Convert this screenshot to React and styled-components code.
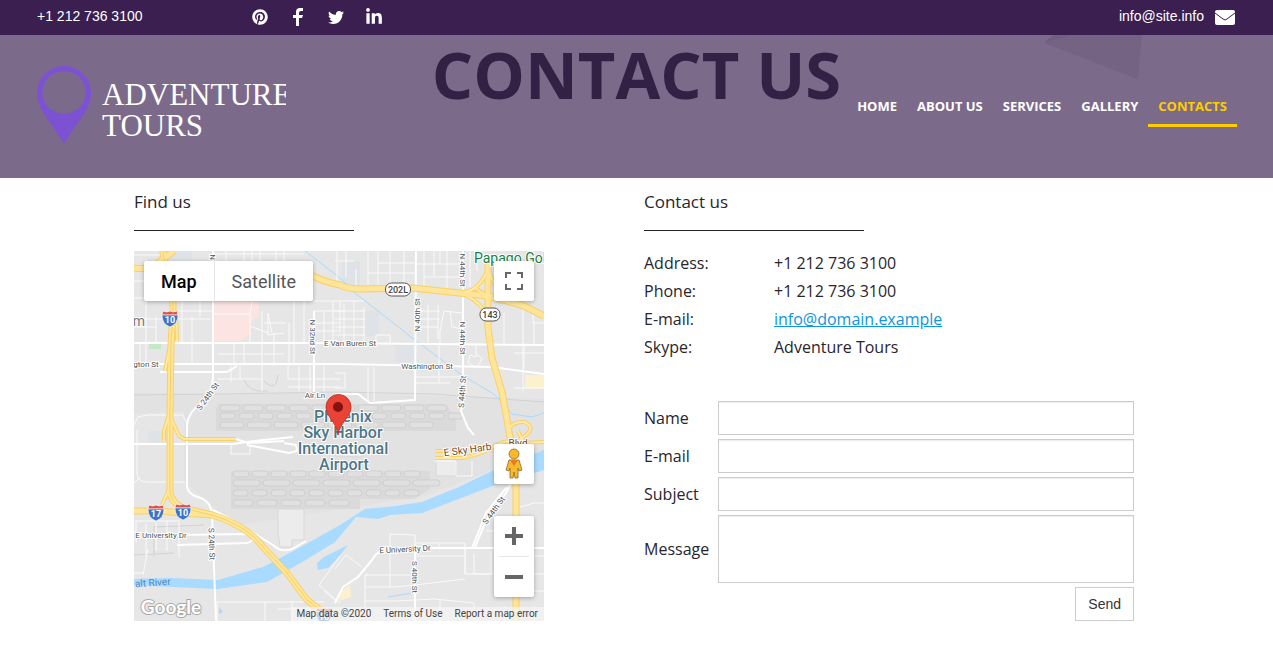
import React from "react";
import styled, { createGlobalStyle } from "styled-components";
import { FaPinterest, FaFacebookF, FaTwitter, FaLinkedinIn } from "react-icons/fa";

// --- STYLES ---
const GlobalStyle = createGlobalStyle`
  *, *::before, *::after { box-sizing: border-box; }
  body {
    margin: 0;
    background: #fff;
    color: #29252c;
    font-family: "Open Sans", sans-serif;
    font-size: 16px;
    line-height: 28px;
  }
`;

const TopBar = styled.div`
  display: flex;
  align-items: center;
  height: 35px;
  padding: 0 38px 1px 37px;
  background: #3b1f51;
  color: #fff;
  font-family: "Liberation Sans", Arial, sans-serif;
  font-size: 14px;
`;

const TopLink = styled.a`
  display: flex;
  align-items: center;
  gap: 11px;
  color: inherit;
  text-decoration: none;
`;

const TopText = styled.span`
  padding-bottom: 3px;
`;

const Phone = styled(TopLink)`
  width: 215px;
`;

const Socials = styled.div`
  display: flex;
  flex: 1;
  gap: 22px;
`;

const SocialLink = styled.a`
  display: flex;
  align-items: center;
  justify-content: center;
  width: 16px;
  color: #fff;
`;

const Header = styled.header`
  position: relative;
  display: grid;
  grid-template-columns: 1fr auto 1fr;
  align-items: start;
  min-height: 143px;
  padding: 3px 36px 0;
  background: #7c6a8b;
`;

const Shard = styled.svg`
  position: absolute;
  top: 0;
  right: 131px;
`;

const Logo = styled.a`
  display: flex;
  gap: 10px;
  width: 250px;
  margin-top: 27px;
  overflow: hidden;
  color: #fff;
  text-decoration: none;
  font-family: "Liberation Serif", "Times New Roman", serif;
  font-size: 31px;
  line-height: 31px;
`;

const LogoPin = styled.svg`
  flex: none;
`;

const LogoText = styled.span`
  padding-top: 14px;
`;

const Title = styled.h1`
  margin: 0;
  color: #332145;
  font-size: 65px;
  font-weight: 700;
  line-height: 72px;
`;

const Nav = styled.nav`
  display: flex;
  justify-content: flex-end;
  margin-top: 53px;
`;

const NavLink = styled.a`
  padding: 0 10px 3px;
  border-bottom: 3px solid ${(p) => (p.$active ? "#ffcc00" : "transparent")};
  color: ${(p) => (p.$active ? "#ffcc00" : "#fff")};
  font-size: 13px;
  font-weight: 700;
  line-height: 30px;
  text-decoration: none;
  white-space: nowrap;
`;

const Main = styled.main`
  display: grid;
  grid-template-columns: 1fr 1fr;
  gap: 15px;
  max-width: 1005px;
  margin: 0 auto;
  padding: 10px 0 24px;
`;

const Heading = styled.h2`
  position: relative;
  margin: 0 0 20px;
  padding-bottom: 15px;
  font-size: 17px;
  font-weight: 400;

  &::after {
    content: "";
    display: block;
    position: absolute;
    bottom: 0;
    width: 220px;
    border-bottom: 1px solid #262229;
  }
`;

const Details = styled.dl`
  display: grid;
  grid-template-columns: 130px 1fr;
  margin: -2px 0 40px;
`;

const Value = styled.dd`
  margin: 0;
`;

const MailLink = styled.a`
  color: #0d96e0;
`;

const Form = styled.form`
  display: grid;
  grid-template-columns: 74px 1fr;
  gap: 4px 0;
  align-items: center;
  max-width: 490px;
`;

const Field = styled.input`
  display: block;
  width: 100%;
  height: ${(p) => (p.$tall ? "68px" : "34px")};
  padding: 6px 12px;
  border: 1px solid #ccc;
  border-radius: 0;
  box-shadow: inset 0 1px 1px rgba(0, 0, 0, 0.075);
  font: inherit;
  resize: none;
`;

const Send = styled.button`
  grid-column: 2;
  justify-self: end;
  height: 34px;
  padding: 0 12px;
  border: 1px solid #ccc;
  background: #fff;
  color: #333;
  font-family: "Liberation Sans", Arial, sans-serif;
  font-size: 14px;
`;

const MapBox = styled.div`
  position: relative;
  max-width: 410px;
  height: 370px;
  overflow: hidden;
  background: #e7e7e7;
  font-family: Roboto, sans-serif;
`;

const MapSvg = styled.svg`
  display: block;
  font-family: Roboto, sans-serif;
`;

const MapTypes = styled.div`
  position: absolute;
  top: 10px;
  left: 10px;
  display: flex;
  border-radius: 2px;
  background: #fff;
  box-shadow: 0 1px 4px rgba(0, 0, 0, 0.3);
`;

const MapType = styled.button`
  height: 40px;
  padding: 0 17px;
  border: 0;
  border-left: ${(p) => (p.$active ? "0" : "1px solid #e6e6e6")};
  background: none;
  color: ${(p) => (p.$active ? "#000" : "#565656")};
  font-family: Roboto, sans-serif;
  font-size: 18px;
  font-weight: ${(p) => (p.$active ? 500 : 400)};
`;

const MapControls = styled.div`
  position: absolute;
  top: 10px;
  right: 10px;
  bottom: 24px;
  display: flex;
  flex-direction: column;
  gap: 32px;
`;

const ControlGroup = styled.div`
  display: flex;
  flex-direction: column;
  align-items: center;
  margin-top: ${(p) => (p.$push ? "auto" : "0")};
  border-radius: 2px;
  background: #fff;
  box-shadow: 0 1px 4px rgba(0, 0, 0, 0.3);
`;

const ControlButton = styled.button`
  display: flex;
  align-items: center;
  justify-content: center;
  width: 40px;
  height: 40px;
  padding: 0;
  border: 0;
  background: none;
`;

const Divider = styled.span`
  width: 30px;
  height: 1px;
  background: #e6e6e6;
`;

const Attribution = styled.div`
  position: absolute;
  right: 0;
  bottom: 0;
  display: flex;
  gap: 12px;
  padding: 0 6px 0 5px;
  background: rgba(245, 245, 245, 0.7);
  color: #444;
  font-size: 10px;
  line-height: 14px;
  white-space: nowrap;
`;

const AttributionLink = styled.a`
  color: inherit;
  text-decoration: none;
`;

// --- MAP DATA ---
const localRoads = [
  "M0 4H26M0 30H34M0 47H76M0 68H76M0 76H22M44 60H80M12 8V112M22 66V92M48 50V92M58 66V112M66 47V66M6 92V112",
  "M79 3H170M92 0V10M110 0V10M126 0V10M142 0V10M150 0V10M118 0V10",
  "M80 63H116L118 50M116 63V92M128 60V140M140 82V115M116 75L134 82M134 62L138 82M155 72V115",
  "M130 72H152M134 62V84L150 82M100 92V115M110 92V115M84 103H128M130 103H150M97 115V131M84 128H128M106 115V128",
  "M160 50V115M170 50V92M180 60H210M180 72H206M180 80H206M190 60V92M199 50V92M206 50V82M180 50H230M154 115V128H206M165 115V140M176 115V140M190 115V140M154 136H206",
  "M201 10H220M203 0V30M212 0V26M222 18V36M234 0V37M244 0V37M256 0V37M270 0V37M234 22H282M244 12H282",
  "M201 60H231M201 68H231M201 76H231M201 84H231M210 52V92M220 50V92M230 56V92M242 84V92M256 84V94M242 84H256",
  "M290 0V38M300 0V26M313 0V40M282 13H330M290 26H329M306 0V13M336 0V36M343 0V20M370 62V92M389 58V140M400 70V94",
  "M294 54V92M304 54V88M282 60H306M282 68H306M282 76H304M306 80L310 60L328 62M306 92V80M316 60L318 76L328 78",
  "M282 126H328M282 132H316M305 94V132M234 116V150M240 116V150M201 122H211V137H201M380 102H410M380 137H410M390 94V118M399 60V72H410",
  "M2 270H45M2 291V270M12 272V305M22 272V300M33 270V300M45 270V306M9 324L14 298M0 322H9",
  "M83 351H190M131 350V370M144 358H190M83 351V370M158 350V370M190 340L202 350",
  "M256 283V336M256 283L281 284V298M281 292H331V323H410M305 292V298M281 305H331M231 358V324H281M231 324L234 323M231 336H262L281 334L331 328",
  "M231 350H262L300 348L340 352V370M331 297V323M340 303V323H357V300M306 348V370M352 280H362V278M386 256L400 252H410M371 355V370M400 355V370M386 305H410M386 340H410",
  "M185 334L206 305M185 334L206 352M201 318L212 304L228 316M97 194V203H116V194M300 210H322V225H338V210",
  "M0 174L4 166L13 164H49L53 174M3 179V222Q3 231 14 231H51M0 232L6 226",
  "M342 92V106L336 104L334 112L343 116L348 108L342 102",
];

const mainRoads = [
  "M79 0V127Q78 144 66 153T53 174V236Q55 244 64 246Q76 249 78 262L82 370",
  "M0 113H206L358 116L410 123",
  "M26 121H93L103 115",
  "M0 92H189L410 94",
  "M180 60V141M282 0L281 149L236 152L224 143H201",
  "M329 0V150L327 160L334 177L340 184",
  "M0 193H99",
  "M43 284L113 283Q125 288 113 292L43 294",
  "M79 259L100 270L139 294Q147 302 158 298L172 290",
  "M201 352L209 336L224 326L238 309Q243 300 252 298L298 297H410",
  "M376 234L372 242L358 260L351 272L341 296M373 236L352 262L338 297",
  "M281 301V370M99 193L120 190L159 186M113 194L155 202L163 200L162 194L150 192M102 188L114 192L150 190",
];

const highways = [
  "M29 0Q30 14 36 22Q39 30 39 60L37 94L36 160L36 242Q38 252 49 257Q64 261 78 264Q92 268 106 276Q120 284 129 296L153 322L173 349L190 362",
  "M0 17Q16 20 29 8M29 8L40 0M0 260H23L78 264",
  "M170 20Q185 30 206 34Q213 38 226 38L278 37L354 45L388 54L410 65",
  "M354 12V77L358 107L368 141L374 174Q376 190 381 200L382 236V370",
];

const ramps = [
  "M43 90L42 60M31 120L37 90M36 160L30 180V190M36 165L45 185L50 188H102M36 236L28 254",
  "M330 41Q345 40 354 18M330 43Q348 52 354 66M378 50Q362 42 354 18M340 36L354 46L366 46",
  "M301 200H311M301 207H328Q345 204 358 197Q370 187 388 192L410 191",
  "M374 180Q378 170 390 171Q402 176 392 184L378 195M390 192L384 180",
];

const taxiRows = [
  { y: 157, from: 86, to: 302, step: 23, width: 20 },
  { y: 165, from: 86, to: 318, step: 19, width: 15 },
  { y: 174, from: 86, to: 302, step: 27, width: 24 },
  { y: 223, from: 99, to: 284, step: 19, width: 16 },
  { y: 232, from: 99, to: 280, step: 30, width: 27 },
  { y: 242, from: 99, to: 280, step: 19, width: 15 },
  { y: 252, from: 99, to: 210, step: 24, width: 20 },
];

const streetLabels = [
  { text: "E Van Buren St", x: 216, y: 95 },
  { text: "Washington St", x: 293, y: 118 },
  { text: "gton St", x: 12, y: 116 },
  { text: "Air Ln", x: 181, y: 147 },
  { text: "E University Dr", x: 27, y: 287 },
  { text: "E University Dr", x: 271, y: 301, r: -3 },
  { text: "N 32nd St", x: 176, y: 86, r: 90 },
  { text: "N 40th St", x: 286, y: 64, r: -90 },
  { text: "N 44th St", x: 326, y: 19, r: 90 },
  { text: "N 44th St", x: 326, y: 87, r: 90 },
  { text: "S 44th St", x: 331, y: 141, r: -86 },
  { text: "S 24th St", x: 76, y: 147, r: -54 },
  { text: "S 24th St", x: 75, y: 293, r: 88 },
  { text: "S 40th St", x: 278, y: 326, r: 90 },
  { text: "S 44th St", x: 362, y: 261, r: -54 },
];

const navItems = ["Home", "About us", "Services", "Gallery", "Contacts"];

const details = [
  ["Address:", "+1 212 736 3100"],
  ["Phone:", "+1 212 736 3100"],
  ["E-mail:", "info@domain.example"],
  ["Skype:", "Adventure Tours"],
];

const taxiPads = ({ y, from, to, step, width }) => {
  const pads = [];
  for (let x = from; x < to; x += step) {
    pads.push(<rect key={x} x={x} y={y - 3} width={width} height="6" rx="3" />);
  }
  return pads;
};

const Shield = ({ x, y, label }) => (
  <g transform={`translate(${x} ${y})`}>
    <path d="M-7-7Q-3-5 0-7Q3-5 7-7L8-3H-8Z" fill="#d9534f" stroke="#fff" strokeWidth="0.6" />
    <path d="M-8-3H8Q8 6 0 9Q-8 6-8-3Z" fill="#3b74c8" stroke="#fff" strokeWidth="0.6" />
    <text y="5" fill="#fff" fontSize="9" fontWeight="700" textAnchor="middle">{label}</text>
  </g>
);

const RoutePill = ({ x, y, width, label }) => (
  <g>
    <rect x={x - width / 2} y={y - 6} width={width} height="13" rx="6" fill="#fff" stroke="#555" />
    <text x={x} y={y + 4} fill="#444" fontSize="9" fontWeight="500" textAnchor="middle">{label}</text>
  </g>
);

const MapDrawing = () => (
  <MapSvg width="410" height="370" viewBox="0 0 410 370" role="img" aria-label="Map of Phoenix">
    <rect width="410" height="370" fill="#e6e6e6" />
    <path d="M0 142H203L410 148V200L290 245L100 275L50 230V160L0 163Z" fill="#e2e2e2" />
    <path d="M24 0H58V14H24ZM208 10H226V35H208ZM231 60H245V85H231ZM261 94H281V111H261ZM14 180H34V193H14Z" fill="#dfe3e7" />
    <path d="M80 50H125V65L117 72V83L106 90H80Z" fill="#fbe4e2" />
    <path d="M15 93H27V98H15Z" fill="#c5e8c5" />
    <path d="M391 124H410V138L391 137ZM207 340L216 334L217 346L205 350Z" fill="#fbf1cf" />
    <g fill="none" stroke="#d2d2d2" strokeWidth="1">
      <path d="M0 144L90 143L203 141L300 143L410 151M0 304L40 302M20 306V276L70 274" />
      <path d="M110 128Q114 142 134 140M130 130Q142 142 144 124" />
    </g>
    <path d="M84 153H310L322 164V180H82V158Z" fill="#dadada" />
    <path d="M97 220H296V238L280 248H226V258H97Z" fill="#dadada" />
    <g fill="#e0e0e0" stroke="#cfcfcf" strokeWidth="1">{taxiRows.map(taxiPads)}</g>
    <path d="M144 258H170V289H158V296H146L144 282ZM202 195L228 197V206L202 205ZM302 208H322V225H302Z" fill="#ececec" stroke="#d8d8d8" />

    <path d="M0 328L39 327L84 329L129 316L165 297L206 274L231 258L262 255L288 251L325 236L360 219L410 199V219L361 234L288 262L256 264L244 268L222 266L201 291L170 310L133 331L84 338L39 336L0 334Z" fill="#a9daff" />
    <path d="M183 312L190 306L214 294L202 309L194 317L184 319Z" fill="#a9daff" />
    <path d="M85 356L89 361L85 363Z" fill="#a9daff" />
    <path d="M171 0L206 27L221 42L281 89L328 124L361 144L368 151L378 163L398 166L410 162M254 346L278 342" fill="none" stroke="#a9daff" strokeWidth="1" />

    <g fill="none" stroke="#fafafa" strokeWidth="1">{localRoads.map((d) => <path key={d} d={d} />)}</g>
    <g fill="none" stroke="#fff" strokeWidth="2" strokeLinejoin="round">{mainRoads.map((d) => <path key={d} d={d} />)}</g>
    <g fill="none" strokeLinejoin="round">
      <g stroke="#f8d066" strokeWidth="4">{ramps.map((d) => <path key={d} d={d} />)}</g>
      <g stroke="#f8d066" strokeWidth="7">{highways.map((d) => <path key={d} d={d} />)}</g>
      <g stroke="#ffe9a3" strokeWidth="2">{ramps.map((d) => <path key={d} d={d} />)}</g>
      <g stroke="#ffe59a" strokeWidth="5">{highways.map((d) => <path key={d} d={d} />)}</g>
      <path d={highways[0]} stroke="#f8d066" strokeWidth="1" />
    </g>

    <g fontSize="8" fill="#4f5357" stroke="#fff" strokeWidth="2" paintOrder="stroke" textAnchor="middle">
      {streetLabels.map(({ text, x, y, r = 0 }) => (
        <text key={`${text}${x}${y}`} x={x} y={y} transform={`rotate(${r} ${x} ${y})`}>{text}</text>
      ))}
      <text x="76" y="6" transform="rotate(90 76 6)">N</text>
      <text x="5" y="75" fontSize="14" fill="#777">m</text>
      <text x="19" y="335" fontSize="10" fill="#4f86c6" stroke="none" transform="rotate(-4 19 335)">alt River</text>
      <text x="340" y="12" fontSize="14" fill="#188045" textAnchor="start">Papago Gol</text>
      <text x="334" y="202" fontSize="10" fill="#7a4b12" transform="rotate(-8 334 202)">E Sky Harb</text>
      <text x="384" y="196" fontSize="10" fill="#7a4b12">Blvd</text>
      <g fontSize="16" fontWeight="500" fill="#4d7688">
        <text x="209" y="171">Phoenix</text>
        <text x="209" y="187">Sky Harbor</text>
        <text x="209" y="203">International</text>
        <text x="210" y="219">Airport</text>
      </g>
      <text x="37" y="363" fontSize="19" fontWeight="700" fontFamily="Lato, sans-serif" fill="#fff" stroke="#a8a8a8">Google</text>
    </g>

    <Shield x={36} y={67} label="10" />
    <Shield x={22} y={261} label="17" />
    <Shield x={49} y={260} label="10" />
    <Shield x={190} y={364} label="10" />
    <RoutePill x={264} y={38} width={25} label="202L" />
    <RoutePill x={356} y={63} width={20} label="143" />

    <path d="M204 184C203 171 192 166 192 156A12 12 0 0 1 217 156C217 166 206 171 204 184Z" fill="#ea4335" stroke="#c5362a" />
    <circle cx="204" cy="156" r="5" fill="#7f1410" />
  </MapSvg>
);

const MapPanel = () => (
  <MapBox>
    <MapDrawing />
    <MapTypes>
      <MapType type="button" $active>Map</MapType>
      <MapType type="button">Satellite</MapType>
    </MapTypes>
    <MapControls>
      <ControlGroup>
        <ControlButton type="button" aria-label="Toggle fullscreen view">
          <svg width="18" height="18" viewBox="0 0 18 18" fill="#666">
            <path d="M0 0H6V2H2V6H0ZM12 0H18V6H16V2H12ZM0 12H2V16H6V18H0ZM16 12H18V18H12V16H16Z" />
          </svg>
        </ControlButton>
      </ControlGroup>
      <ControlGroup $push>
        <ControlButton type="button" aria-label="Street View">
          <svg width="18" height="32" viewBox="0 0 18 32">
            <path d="M4 12H14L17 22L14 23L13 20V30H10L9 24L8 30H5V20L4 23L1 22Z" fill="#fbb829" stroke="#8b6a2b" strokeWidth="0.8" />
            <circle cx="9" cy="6" r="5" fill="#fbb829" stroke="#8b6a2b" strokeWidth="0.8" />
            <path d="M5 12H13L9 18Z" fill="#e57b24" />
          </svg>
        </ControlButton>
      </ControlGroup>
      <ControlGroup>
        <ControlButton type="button" aria-label="Zoom in">
          <svg width="18" height="18" viewBox="0 0 18 18" fill="#666">
            <path d="M7 0H11V7H18V11H11V18H7V11H0V7H7Z" />
          </svg>
        </ControlButton>
        <Divider />
        <ControlButton type="button" aria-label="Zoom out">
          <svg width="18" height="4" viewBox="0 0 18 4" fill="#666">
            <path d="M0 0H18V4H0Z" />
          </svg>
        </ControlButton>
      </ControlGroup>
    </MapControls>
    <Attribution>
      <span>Map data ©2020</span>
      <AttributionLink href="#terms">Terms of Use</AttributionLink>
      <AttributionLink href="#report">Report a map error</AttributionLink>
    </Attribution>
  </MapBox>
);

const App = () => {
  return (
    <>
      <GlobalStyle />
      <TopBar>
        <Phone href="tel:+12127363100"><TopText>+1 212 736 3100</TopText></Phone>
        <Socials>
          <SocialLink href="#pinterest" aria-label="Pinterest"><FaPinterest size={16} /></SocialLink>
          <SocialLink href="#facebook" aria-label="Facebook">
            <svg width="10" height="18" viewBox="0 0 10 18" fill="#fff">
              <path d="M10 0V3H8Q6 3 6 5V7H10L9 10H6V18H3V10H0V7H3V4Q3 0 7 0Z" />
            </svg>
          </SocialLink>
          <SocialLink href="#twitter" aria-label="Twitter"><FaTwitter size={17} /></SocialLink>
          <SocialLink href="#linkedin" aria-label="LinkedIn"><FaLinkedinIn size={18} /></SocialLink>
        </Socials>
        <TopLink href="mailto:info@site.info">
          <TopText>info@site.info</TopText>
          <svg width="20" height="16" viewBox="0 0 20 16">
            <rect y="1" width="20" height="15" rx="2" fill="#fff" />
            <path d="M0 4L8 10Q10 12 12 10L20 4" fill="none" stroke="#3b1f51" strokeWidth="1" />
          </svg>
        </TopLink>
      </TopBar>

      <Header>
        <Shard width="98" height="44" viewBox="0 0 98 44">
          <path d="M0 8L10 0H98L94 44Z" fill="#756384" />
          <path d="M0 8L10 0H28Z" fill="#715f80" />
        </Shard>
        <Logo href="#home">
          <LogoPin width="56" height="80" viewBox="0 0 56 80">
            <path
              d="M28 1A27 27 0 0 0 1 30C2 46 18 61 28 79C38 61 54 46 55 30A27 27 0 0 0 28 1ZM28 6A21.500 21.500 0 1 1 28 49A21.500 21.500 0 1 1 28 6Z"
              fill="#7c52d3"
              fillRule="evenodd"
            />
          </LogoPin>
          <LogoText>ADVENTURE TOURS</LogoText>
        </Logo>
        <Title>CONTACT US</Title>
        <Nav>
          {navItems.map((item) => (
            <NavLink key={item} href={`#${item}`} $active={item === "Contacts"}>
              {item.toUpperCase()}
            </NavLink>
          ))}
        </Nav>
      </Header>

      <Main>
        <section>
          <Heading>Find us</Heading>
          <MapPanel />
        </section>
        <section>
          <Heading>Contact us</Heading>
          <Details>
            {details.map(([label, value]) => (
              <React.Fragment key={label}>
                <dt>{label}</dt>
                <Value>
                  {label === "E-mail:" ? <MailLink href={`mailto:${value}`}>{value}</MailLink> : value}
                </Value>
              </React.Fragment>
            ))}
          </Details>
          <Form>
            <label htmlFor="name">Name</label>
            <Field id="name" type="text" />
            <label htmlFor="email">E-mail</label>
            <Field id="email" type="email" />
            <label htmlFor="subject">Subject</label>
            <Field id="subject" type="text" />
            <label htmlFor="message">Message</label>
            <Field as="textarea" id="message" $tall />
            <Send type="submit">Send</Send>
          </Form>
        </section>
      </Main>
    </>
  );
};

export default App;
